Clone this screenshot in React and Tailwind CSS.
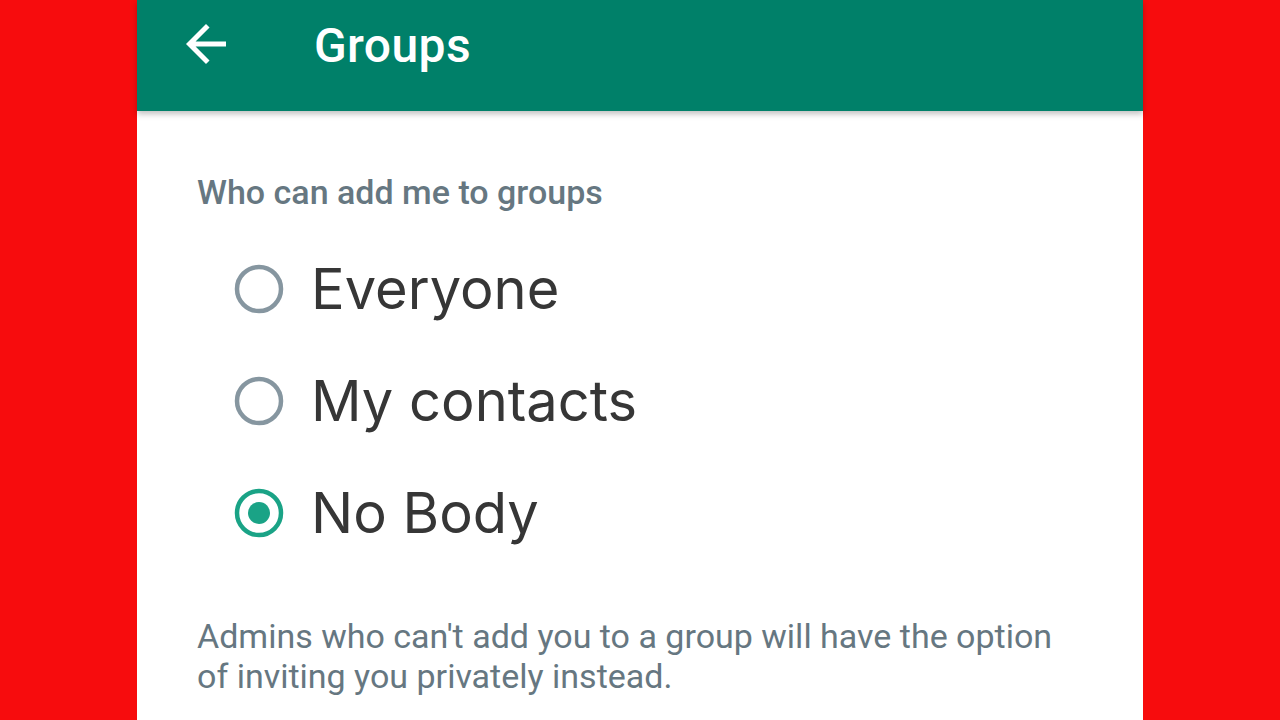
import React from "react";

const options = [
  { label: "Everyone", checked: false },
  { label: "My contacts", checked: false },
  { label: "No Body", checked: true },
];

function Radio({ checked }) {
  return (
    <svg width="52" height="52" viewBox="0 0 52 52" className="shrink-0">
      <circle
        cx="26"
        cy="26"
        r="22"
        fill="none"
        stroke={checked ? "#1aa386" : "#8696a0"}
        strokeWidth="4.5"
      />
      {checked && <circle cx="26" cy="26" r="11" fill="#1aa386" />}
    </svg>
  );
}

function BackArrow() {
  return (
    <svg width="60" height="60" viewBox="0 0 24 24" className="shrink-0">
      <path
        d="M20 11H7.83l5.59-5.59L12 4l-8 8 8 8 1.41-1.41L7.83 13H20v-2z"
        fill="#ffffff"
      />
    </svg>
  );
}

export default function App() {
  return (
    <div className="flex h-[720px] w-[1280px] bg-[#f70c0d] overflow-hidden">
      <div className="w-[137px] shrink-0" />
      <div className="flex w-[1006px] shrink-0 flex-col bg-white">
        <header className="relative z-10 flex h-[111px] shrink-0 items-start bg-[#008069] shadow-[0_3px_6px_rgba(0,0,0,0.25)]">
          <div className="ml-[39px] mt-[14px] flex items-center">
            <BackArrow />
          </div>
          <h1
            className="ml-[78px] mt-[18px] text-[48px] font-medium leading-[56px] tracking-[0.4px] text-white"
            style={{ fontFamily: "Roboto, 'Liberation Sans', sans-serif" }}
          >
            Groups
          </h1>
        </header>
        <div
          className="flex flex-col pl-[60px]"
          style={{ fontFamily: "Roboto, 'Liberation Sans', sans-serif" }}
        >
          <p className="mt-[61px] text-[34px] font-medium leading-[40px] text-[#667781]">
            Who can add me to groups
          </p>
          <div className="mt-[51px] flex flex-col gap-[60px] pl-[36px]">
            {options.map((o) => (
              <div key={o.label} className="flex h-[52px] items-center gap-[26px]">
                <Radio checked={o.checked} />
                <span
                  className="text-[56px] leading-none text-[#363636]"
                  style={{ fontFamily: "Inter, 'Noto Sans', sans-serif" }}
                >
                  {o.label}
                </span>
              </div>
            ))}
          </div>
          <p className="mt-[77px] w-[900px] text-[34px] leading-[40px] text-[#667781]">
            Admins who can't add you to a group will have the option
            <br />
            of inviting you privately instead.
          </p>
        </div>
      </div>
      <div className="flex-1" />
    </div>
  );
}
